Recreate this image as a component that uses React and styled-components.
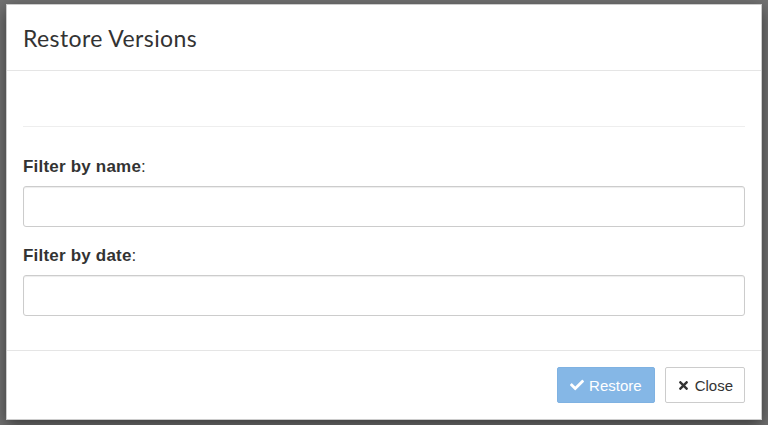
import React from 'react'
import styled, {createGlobalStyle} from "styled-components"
import {FaCheck, FaTimes} from "react-icons/fa"

const GlobalStyle = createGlobalStyle`
html, body {
  margin: 0;
  padding: 0;
  background: #727272;
}
* {
  box-sizing: border-box;
}
`

const App = () => {
    const [name, setName] = React.useState("")
    const [date, setDate] = React.useState("")

    return (
        <Page>
            <GlobalStyle/>
            <Modal>
                <Header>
                    <Title>Restore Versions</Title>
                </Header>
                <Body>
                    <Spacer/>
                    <Rule/>
                    <FormGroup>
                        <Label><strong>Filter by name</strong>:</Label>
                        <Input value={name} onChange={(e)=>setName(e.target.value)}/>
                    </FormGroup>
                    <FormGroup>
                        <Label><strong>Filter by date</strong>:</Label>
                        <Input value={date} onChange={(e)=>setDate(e.target.value)}/>
                    </FormGroup>
                </Body>
                <Footer>
                    <Button primary disabled>
                        <FaCheck size={14}/>
                        Restore
                    </Button>
                    <Button>
                        <FaTimes size={13}/>
                        Close
                    </Button>
                </Footer>
            </Modal>
        </Page>
    )
}

export default App

const Page = styled.div`
padding: 4px 6px;
min-height: 425px;
`

const Modal = styled.div`
background: #fff;
border: 1px solid rgba(0,0,0,0.2);
box-shadow: 0 5px 15px rgba(0,0,0,0.5);
display: flex;
flex-direction: column;
`

const Header = styled.div`
height: 66px;
padding: 0 16px;
display: flex;
align-items: center;
border-bottom: 1px solid #e5e5e5;
`

const Title = styled.h4`
margin: 0;
font-family: Lato, "Open Sans", sans-serif;
font-weight: 400;
font-size: 23px;
letter-spacing: 0.4px;
color: #333;
`

const Body = styled.div`
padding: 15px 16px 16px;
`

const Spacer = styled.div`
height: 20px;
`

const Rule = styled.hr`
margin: 20px 0 29px;
border: 0;
border-top: 1px solid #eee;
`

const FormGroup = styled.div`
display: flex;
flex-direction: column;
margin-bottom: 18px;
`

const Label = styled.label`
font-family: "Liberation Sans", Arial, sans-serif;
font-size: 17px;
line-height: 22px;
letter-spacing: 0.2px;
color: #333;
margin-bottom: 8px;
strong {
  font-weight: bold;
}
`

const Input = styled.input`
height: 41px;
width: 100%;
border: 1px solid #ccc;
border-radius: 3px;
padding: 6px 12px;
font-family: "Liberation Sans", Arial, sans-serif;
font-size: 15px;
color: #555;
box-shadow: inset 0 1px 1px rgba(0,0,0,0.075);
outline: none;
`

const Footer = styled.div`
border-top: 1px solid #e5e5e5;
padding: 16px;
display: flex;
justify-content: flex-end;
gap: 10px;
`

const Button = styled.button`
height: 36px;
padding: ${p => p.primary ? "0 12px" : "0 11px"};
display: flex;
align-items: center;
gap: 5px;
font-family: "Liberation Sans", Arial, sans-serif;
font-size: 15px;
border-radius: 2px;
border: 1px solid ${p => p.primary ? "#7fb2e2" : "#ccc"};
background: ${p => p.primary ? "#85b7e6" : "#fff"};
color: ${p => p.primary ? "#fff" : "#333"};
cursor: ${p => p.disabled ? "not-allowed" : "pointer"};
`
